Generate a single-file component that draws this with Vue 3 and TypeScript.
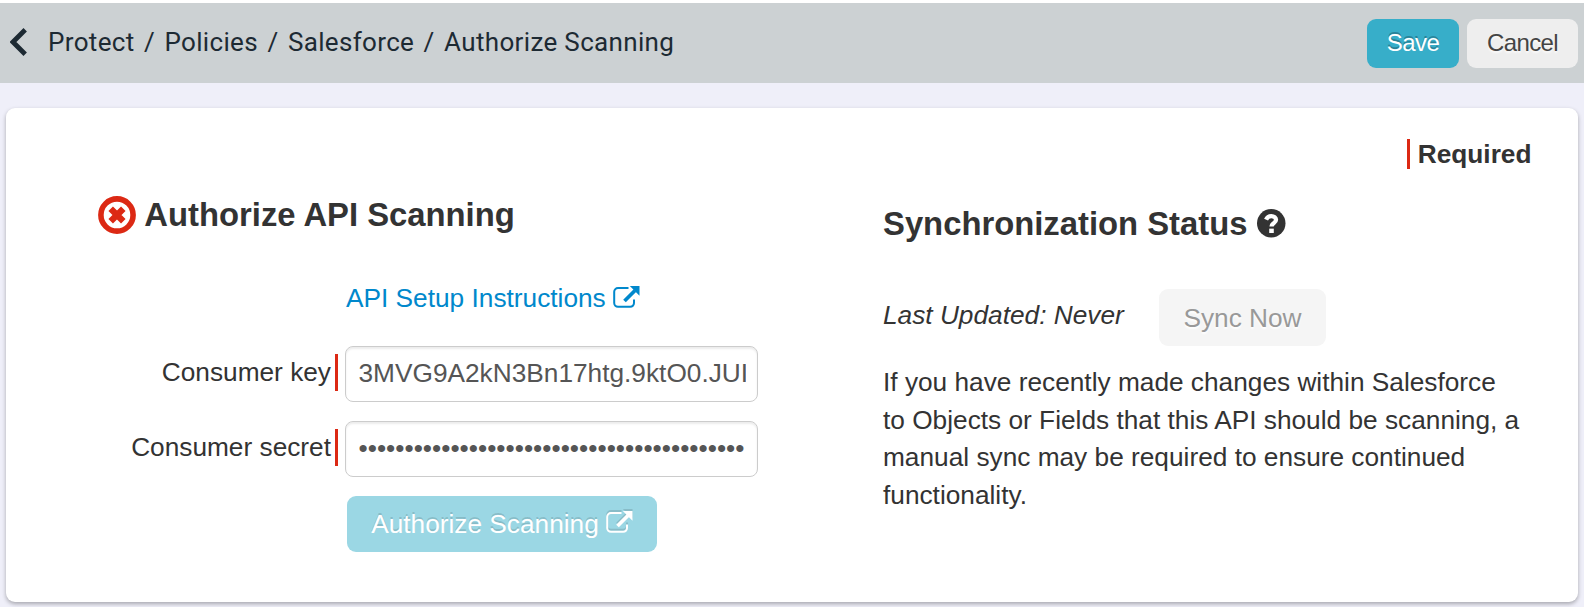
<script setup lang="ts">
import { ref } from 'vue'

const crumbs: string[] = ['Protect', 'Policies', 'Salesforce', 'Authorize Scanning']
const consumerKey = ref('3MVG9A2kN3Bn17htg.9ktO0.JUI')
const consumerSecret = ref('x'.repeat(42))
</script>

<template>
  <div class="page">
    <header class="topbar">
      <svg class="back" viewBox="0 0 18 28" aria-hidden="true">
        <path d="M15.2 1.8 3 14l12.2 12.2" fill="none" stroke="#1d2a33" stroke-width="4.8" />
      </svg>
      <nav class="crumbs">
        <template v-for="(crumb, i) in crumbs" :key="crumb">
          <span v-if="i > 0" class="slash">/</span>
          <span>{{ crumb }}</span>
        </template>
      </nav>
      <button class="btn small primary save">Save</button>
      <button class="btn small cancel">Cancel</button>
    </header>

    <main class="card">
      <div class="required">Required</div>
      <div class="columns">
        <section class="auth">
          <h2 class="title">
            <svg class="status" viewBox="0 0 38 38" aria-hidden="true">
              <circle cx="19" cy="19" r="16.1" fill="none" stroke="#dc2914" stroke-width="5.6" />
              <path d="M12.7 12.7 25.3 25.3M25.3 12.7 12.7 25.3" stroke="#dc2914" stroke-width="6.4" />
            </svg>
            <span>Authorize API Scanning</span>
          </h2>
          <a class="link">
            <span>API Setup Instructions</span>
            <svg class="ext" viewBox="0 0 27 24" aria-hidden="true">
              <path d="M15.5 3H5a3.8 3.8 0 0 0-3.8 3.8v11.2A3.8 3.8 0 0 0 5 21.8h12.2A3.8 3.8 0 0 0 21 18v-3.6" fill="none" stroke="currentColor" stroke-width="2" />
              <path d="M11.5 16 22 5.5" stroke="currentColor" stroke-width="3.8" />
              <path d="M16.8 1h9.7v9.7z" fill="currentColor" />
            </svg>
          </a>
          <div class="field">
            <label for="key">Consumer key</label>
            <i class="mark"></i>
            <input id="key" v-model="consumerKey" type="text" />
          </div>
          <div class="field">
            <label for="secret">Consumer secret</label>
            <i class="mark"></i>
            <input id="secret" v-model="consumerSecret" type="password" />
          </div>
          <button class="btn primary authorize" disabled>
            <span>Authorize Scanning</span>
            <svg class="ext" viewBox="0 0 27 24" aria-hidden="true">
              <path d="M15.5 3H5a3.8 3.8 0 0 0-3.8 3.8v11.2A3.8 3.8 0 0 0 5 21.8h12.2A3.8 3.8 0 0 0 21 18v-3.6" fill="none" stroke="currentColor" stroke-width="2" />
              <path d="M11.5 16 22 5.5" stroke="currentColor" stroke-width="3.8" />
              <path d="M16.8 1h9.7v9.7z" fill="currentColor" />
            </svg>
          </button>
        </section>

        <section class="sync">
          <h2 class="title">
            <span>Synchronization Status</span>
            <svg class="help" viewBox="0 0 28 28" aria-hidden="true">
              <circle cx="14" cy="14" r="14" fill="#333" />
              <path d="M8.9 10.4C10 7.8 11.6 6.9 14.1 6.9c2.6 0 4.6 1.5 4.6 3.7 0 3.2-4.4 3.3-4.4 6.6" fill="none" stroke="#fff" stroke-width="4.2" />
              <path d="M12 19.3h4.5v4.3H12z" fill="#fff" />
            </svg>
          </h2>
          <div class="sync-row">
            <em>Last Updated: Never</em>
            <button class="btn sync-now" disabled>Sync Now</button>
          </div>
          <p class="note">
            If you have recently made changes within Salesforce<br />
            to Objects or Fields that this API should be scanning, a<br />
            manual sync may be required to ensure continued<br />
            functionality.
          </p>
        </section>
      </div>
    </main>
  </div>
</template>

<style>
body {
  background: #efeff9;
}
</style>

<style scoped>
.page {
  box-sizing: border-box;
  height: 607px;
  overflow: hidden;
  border-top: 3px solid #fff;
  background: #efeff9;
  color: #333;
  font: 26.25px/37.5px 'Liberation Sans', Arial, sans-serif;
}
.topbar {
  display: flex;
  align-items: center;
  height: 80px;
  padding-right: 6px;
  background: #ccd1d3;
}
.back {
  width: 18px;
  height: 28px;
  margin: 0 20.5px 2px 9.5px;
}
.crumbs {
  display: flex;
  flex: 1;
  padding-bottom: 2px;
  color: #1d2a33;
  font: 26px/38px Roboto, sans-serif;
  letter-spacing: 0.34px;
  white-space: nowrap;
}
.slash {
  margin: 0 9.4px;
}
.btn {
  display: flex;
  align-items: center;
  justify-content: center;
  box-sizing: border-box;
  padding: 0;
  border: 0;
  border-radius: 9px;
  font: 26.25px/37.5px 'Liberation Sans', Arial, sans-serif;
  white-space: nowrap;
}
.small {
  height: 49px;
  font-size: 24px;
  letter-spacing: -0.6px;
}
.primary {
  background: #37aec9;
  color: #fff;
  text-shadow: 0 -2px 0 rgba(0, 0, 0, 0.25);
}
.save {
  width: 92px;
  margin: 0 8px 0 0;
}
.cancel {
  width: 111px;
  background: #eee;
  color: #444;
  text-shadow: 0 2px 2px rgba(255, 255, 255, 0.75);
}
.card {
  box-sizing: border-box;
  height: 494px;
  margin: 25px 6px 0;
  padding: 31px 46.5px 0 90px;
  border-radius: 9px;
  background: #fff;
  box-shadow: 0 2px 4px rgba(0, 0, 0, 0.3);
}
.required {
  width: fit-content;
  height: 30px;
  margin-left: auto;
  padding-left: 8px;
  border-left: 3px solid #dc2914;
  font-weight: bold;
  line-height: 30px;
}
.columns {
  display: flex;
}
.auth {
  width: 787px;
  padding-top: 27px;
}
.title {
  display: flex;
  align-items: center;
  height: 38px;
  margin: 0;
  font-size: 32.8px;
  line-height: 38px;
  white-space: nowrap;
}
.status {
  width: 38px;
  height: 38px;
  margin: 0 8px 0 2.3px;
}
.link {
  display: flex;
  align-items: center;
  height: 38px;
  margin: 46px 0 28px 250px;
  color: #08c;
}
.ext {
  width: 27px;
  height: 24px;
  margin: 0 0 4px 7px;
}
.field {
  display: flex;
  height: 56px;
  margin-bottom: 19px;
}
label {
  width: 235px;
  padding-top: 8px;
  text-align: right;
}
.mark {
  width: 3px;
  height: 37px;
  margin: 8px 7px 0 4px;
  background: #dc2914;
}
input {
  box-sizing: border-box;
  width: 413px;
  height: 56px;
  padding: 0 11.5px 2px 12.5px;
  border: 1px solid #ccc;
  border-radius: 8px;
  outline: 0;
  background: #fff;
  color: #555;
  font: 26.25px 'Liberation Sans', Arial, sans-serif;
  box-shadow: inset 0 2px 2px rgba(0, 0, 0, 0.075);
}
.authorize {
  width: 310px;
  height: 56px;
  margin-left: 251px;
  padding-top: 2px;
  background: #9bd7e4;
  text-shadow: 0 -2px 0 rgba(0, 0, 0, 0.12);
}
.authorize .ext {
  margin-bottom: 6px;
  filter: drop-shadow(0 -2px 0 rgba(0, 0, 0, 0.12));
}
.sync {
  padding-top: 36px;
}
.help {
  width: 28.5px;
  height: 28.5px;
  margin: 0 0 1px 10px;
}
.sync-row {
  display: flex;
  margin-top: 46px;
  white-space: nowrap;
}
.sync-row em {
  width: 276px;
  padding-top: 8px;
}
.sync-now {
  width: 167px;
  height: 57px;
  padding-top: 2px;
  background: #f5f5f5;
  color: #999;
  text-shadow: 0 2px 2px #fff;
}
.note {
  margin: 18px 0 0;
  white-space: nowrap;
}
</style>
